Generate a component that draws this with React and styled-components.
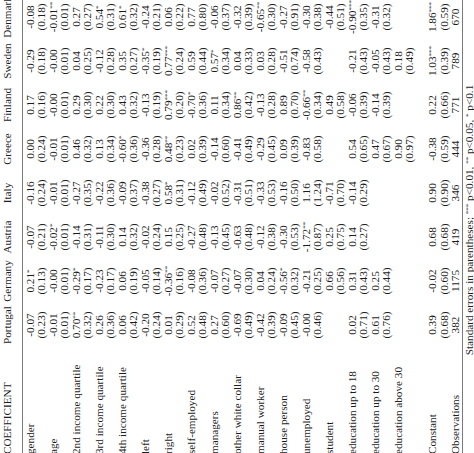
import React from 'react';
import styled, { createGlobalStyle } from 'styled-components';

const Global = createGlobalStyle`
  html, body { margin: 0; padding: 0; background: #fff; overflow: hidden; }
  body { font-family: "Liberation Serif", "Times New Roman", serif; }
`;

const Page = styled.div`
  width: 474px;
  height: 453px;
  overflow: hidden;
  background: #fff;
`;

const Rotator = styled.div`
  width: 462px;
  height: 474px;
  transform-origin: 0 0;
  transform: translate(0, 457px) rotate(-90deg);
`;

const Table = styled.table`
  border-collapse: collapse;
  table-layout: fixed;
  width: 462px;
  font-size: 11.2px;
  line-height: 11.5px;
  color: #1c1c1c;
`;

const HeadCell = styled.th`
  font-weight: normal;
  text-align: ${p => (p.$label ? 'left' : 'center')};
  padding: 2px 0 8px ${p => (p.$label ? '3px' : '0')};
  border-bottom: 1px solid #7a7a7a;
  white-space: nowrap;
`;

const LabelCell = styled.td`
  text-align: left;
  vertical-align: top;
  padding: 0 0 0 3px;
  white-space: nowrap;
  border-bottom: ${p => (p.$rule ? '1px solid #7a7a7a' : 'none')};
`;

const ValueCell = styled.td`
  text-align: center;
  vertical-align: top;
  padding: 0;
  white-space: nowrap;
  border-bottom: ${p => (p.$rule ? '1px solid #7a7a7a' : 'none')};
`;

const Line = styled.div`
  height: 11.5px;
`;

const Spacer = styled.td`
  height: ${p => p.$h}px;
  padding: 0;
`;

const Note = styled.td`
  padding: 1px 0 0 12px;
  text-align: center;
  white-space: nowrap;
`;

const Star = styled.sup`
  font-size: 7px;
  line-height: 0;
  vertical-align: 3.5px;
`;

const widths = [110, 44, 44, 44, 44, 44, 44, 44, 44];
const countries = ['Portugal', 'Germany', 'Austria', 'Italy', 'Greece', 'Finland', 'Sweden', 'Denmark'];

const rows = [
  ['gender', ['-0.07', '0.23'], ['0.21*', '0.13'], ['-0.07', '0.21'], ['-0.16', '0.24'], ['0.00', '0.24'], ['0.17', '0.16'], ['-0.29', '0.18'], ['-0.08', '0.18']],
  ['age', ['-0.01', '0.01'], ['-0.00', '0.01'], ['-0.02*', '0.01'], ['-0.01', '0.01'], ['-0.01', '0.01'], ['-0.00', '0.01'], ['-0.00', '0.01'], ['-0.01**', '0.01']],
  ['2nd income quartile', ['0.70**', '0.32'], ['-0.29*', '0.17'], ['-0.14', '0.31'], ['-0.27', '0.35'], ['0.46', '0.32'], ['0.29', '0.30'], ['0.04', '0.25'], ['0.27', '0.27']],
  ['3rd income quartile', ['0.26', '0.36'], ['-0.23', '0.17'], ['-0.11', '0.30'], ['-0.22', '0.36'], ['0.13', '0.34'], ['0.22', '0.30'], ['-0.12', '0.28'], ['0.54*', '0.31']],
  ['4th income quartile', ['0.06', '0.42'], ['0.06', '0.19'], ['0.14', '0.32'], ['-0.09', '0.37'], ['-0.60*', '0.36'], ['0.43', '0.32'], ['0.35', '0.27'], ['0.61*', '0.32']],
  ['left', ['-0.20', '0.24'], ['-0.05', '0.14'], ['-0.02', '0.24'], ['-0.38', '0.27'], ['-0.36', '0.28'], ['-0.13', '0.19'], ['-0.35*', '0.19'], ['-0.24', '0.21']],
  ['right', ['0.01', '0.29'], ['-0.36**', '0.16'], ['0.15', '0.25'], ['0.58*', '0.31'], ['0.48**', '0.23'], ['0.79***', '0.20'], ['0.77***', '0.24'], ['0.06', '0.22']],
  ['self-employed', ['0.52', '0.48'], ['-0.08', '0.36'], ['-0.27', '0.48'], ['-0.12', '0.49'], ['0.02', '0.39'], ['-0.70*', '0.36'], ['0.59', '0.44'], ['0.77', '0.80']],
  ['managers', ['0.27', '0.60'], ['-0.07', '0.27'], ['-0.13', '0.45'], ['-0.02', '0.52'], ['-0.14', '0.60'], ['0.11', '0.34'], ['0.57*', '0.34'], ['-0.06', '0.37']],
  ['other white collar', ['-0.69', '0.49'], ['-0.07', '0.30'], ['-0.63', '0.48'], ['-0.31', '0.51'], ['-0.41', '0.49'], ['0.86**', '0.42'], ['0.04', '0.33'], ['-0.32', '0.39']],
  ['manual worker', ['-0.42', '0.39'], ['0.04', '0.24'], ['-0.12', '0.38'], ['-0.33', '0.53'], ['-0.29', '0.45'], ['-0.13', '0.28'], ['0.03', '0.28'], ['-0.65**', '0.30']],
  ['house person', ['-0.09', '0.45'], ['-0.56*', '0.32'], ['-0.30', '0.53'], ['-0.16', '0.50'], ['0.09', '0.39'], ['0.89', '0.70'], ['-0.51', '0.74'], ['-0.27', '0.91']],
  ['unemployed', ['-0.00', '0.46'], ['-0.21', '0.25'], ['-1.72**', '0.87'], ['1.16', '1.24'], ['-0.83', '0.58'], ['-0.66**', '0.34'], ['-0.58', '0.43'], ['-0.30', '0.38']],
  ['student', null, ['0.66', '0.56'], ['0.25', '0.75'], ['-0.71', '0.70'], null, ['0.49', '0.58'], null, ['-0.44', '0.51']],
  ['education up to 18', ['0.02', '0.71'], ['0.31', '0.43'], ['0.14', '0.27'], ['-0.14', '0.29'], ['0.54', '0.65'], ['-0.06', '0.39'], ['-0.21', '0.43'], ['-0.90***', '0.35']],
  ['education up to 30', ['0.61', '0.76'], ['0.25', '0.44'], null, null, ['0.47', '0.67'], ['-0.14', '0.39'], ['-0.05', '0.43'], ['-0.31', '0.32']],
  ['education above 30', null, null, null, null, ['0.90', '0.97'], null, ['0.18', '0.49'], null],
];

const constant = [['0.39', '0.68'], ['-0.02', '0.60'], ['0.68', '0.68'], ['0.90', '0.90'], ['-0.38', '0.59'], ['0.22', '0.66'], ['1.03***', '0.39'], ['1.86***', '0.59']];
const observations = ['382', '1175', '419', '346', '444', '771', '789', '670'];

function Coef({ text }) {
  const m = text.match(/^([^*]*)(\**)$/);
  return (
    <>
      {m[1]}
      {m[2] && <Star>{m[2]}</Star>}
    </>
  );
}

function Values({ cell }) {
  if (!cell) return null;
  return (
    <>
      <Line><Coef text={cell[0]} /></Line>
      <Line>({cell[1]})</Line>
    </>
  );
}

export default function App() {
  return (
    <Page>
      <Global />
      <Rotator>
        <Table>
          <colgroup>
            {widths.map((w, i) => <col key={i} style={{ width: w }} />)}
          </colgroup>
          <thead>
            <tr>
              <HeadCell $label>COEFFICIENT</HeadCell>
              {countries.map(c => <HeadCell key={c}>{c}</HeadCell>)}
            </tr>
          </thead>
          <tbody>
            <tr><Spacer colSpan={9} $h={2} /></tr>
            {rows.map(r => (
              <tr key={r[0]}>
                <LabelCell>{r[0]}</LabelCell>
                {r.slice(1).map((cell, i) => (
                  <ValueCell key={i}><Values cell={cell} /></ValueCell>
                ))}
              </tr>
            ))}
            <tr><Spacer colSpan={9} $h={11.5} /></tr>
            <tr>
              <LabelCell>Constant</LabelCell>
              {constant.map((cell, i) => <ValueCell key={i}><Values cell={cell} /></ValueCell>)}
            </tr>
            <tr>
              <LabelCell $rule>Observations</LabelCell>
              {observations.map((o, i) => <ValueCell key={i} $rule><Line>{o}</Line></ValueCell>)}
            </tr>
            <tr>
              <Note colSpan={9}>
                Standard errors in parentheses; <Star>***</Star> p&lt;0.01, <Star>**</Star> p&lt;0.05, <Star>*</Star> p&lt;0.1
              </Note>
            </tr>
          </tbody>
        </Table>
      </Rotator>
    </Page>
  );
}
